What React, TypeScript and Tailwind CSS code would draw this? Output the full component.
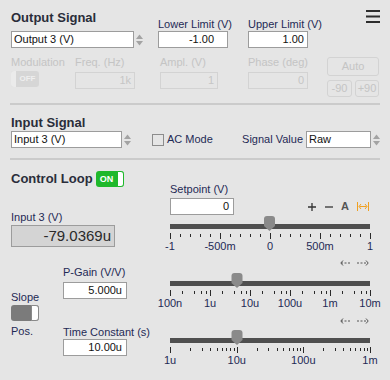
import React from "react";

type Tick = { x: number; major: boolean };
type Lbl = { x: number; t: string };

function Spinner() {
  return (
    <svg width="7" height="12" viewBox="0 0 7 12" className="shrink-0">
      <path d="M0 5 L3.5 0.5 L7 5 Z" fill="#a3a3a3" />
      <path d="M0 7 L3.5 11.5 L7 7 Z" fill="#a3a3a3" />
    </svg>
  );
}

function Hamburger() {
  return (
    <svg width="14" height="13" viewBox="0 0 14 13">
      <rect x="0" y="0" width="14" height="2" fill="#2d2d2d" />
      <rect x="0" y="5.5" width="14" height="2" fill="#2d2d2d" />
      <rect x="0" y="11" width="14" height="2" fill="#2d2d2d" />
    </svg>
  );
}

function Arrows() {
  return (
    <svg width="29" height="6" viewBox="0 0 29 6">
      <path d="M3 0.5 L0.8 3 L3 5.5" stroke="#555" fill="none" strokeWidth="1" />
      <line x1="1" y1="3" x2="11" y2="3" stroke="#555" strokeDasharray="2 1.5" />
      <line x1="17" y1="3" x2="27" y2="3" stroke="#555" strokeDasharray="2 1.5" />
      <path d="M26 0.5 L28.2 3 L26 5.5" stroke="#555" fill="none" strokeWidth="1" />
    </svg>
  );
}

function Slider({ ticks, labels, thumb }: { ticks: Tick[]; labels: Lbl[]; thumb: number }) {
  const c = thumb - 165;
  return (
    <div className="flex flex-col">
      <svg width="210" height="24" viewBox="0 0 210 24" className="-ml-[5px] overflow-visible">
        <rect x="5" y="8" width="200" height="5" fill="#4f4f4f" />
        {ticks.map((t, i) => (
          <rect
            key={i}
            x={Math.round(t.x - 165)}
            y={t.major ? 17 : 18}
            width="1"
            height={t.major ? 6 : 3}
            fill="#2a2a2a"
          />
        ))}
        <path
          d={`M${c - 5.5} 3 Q${c - 5.5} 0 ${c - 2.5} 0 L${c + 2.5} 0 Q${c + 5.5} 0 ${c + 5.5} 3 L${c + 5.5} 10 L${c} 15 L${c - 5.5} 10 Z`}
          fill="#8a8a8a"
        />
      </svg>
      <div className="relative h-[13px] w-[200px]">
        {labels.map((l, i) => (
          <span
            key={i}
            className="absolute top-0 -translate-x-1/2 whitespace-nowrap leading-[13px]"
            style={{ left: l.x - 170 }}
          >
            {l.t}
          </span>
        ))}
      </div>
    </div>
  );
}

function linearTicks(): Tick[] {
  const out: Tick[] = [];
  for (let i = 0; i <= 20; i++) out.push({ x: 170 + i * 10, major: i % 5 === 0 });
  return out;
}

function logTicks(decades: number, minors: number[]): Tick[] {
  const out: Tick[] = [];
  const w = 200 / decades;
  for (let d = 0; d <= decades; d++) {
    out.push({ x: 170 + d * w, major: true });
    if (d < decades) minors.forEach((m) => out.push({ x: 170 + d * w + Math.log10(m) * w, major: false }));
  }
  return out;
}

export default function App() {
  const inputBox = "h-[17px] border border-[#9c9c9c] bg-white text-[#111] leading-[15px]";
  const offBox = "h-[17px] border border-[#d3d3d3] text-[#c6c6c6] leading-[15px] text-right pr-[3px]";

  return (
    <div className="w-[390px] h-[380px] overflow-hidden bg-[#e5e5e5] pl-[11px] pr-[10px] font-['Liberation_Sans',Arial,sans-serif] text-[11px] leading-[13px] text-[#1f2a55]">
      {/* Output Signal */}
      <div className="flex items-end pt-[10px]">
        <div className="w-[147px] flex flex-col">
          <h2 className="text-[13px] font-bold leading-[16px] text-[#2a2d3a]">Output Signal</h2>
          <div className="mt-[5px] flex items-center gap-[2px]">
            <div className={`${inputBox} w-[123px] pl-[2px]`}>Output 3 (V)</div>
            <Spinner />
          </div>
        </div>
        <div className="w-[90px] flex flex-col">
          <span>Lower Limit (V)</span>
          <div className={`${inputBox} w-[70px] text-right pr-[13px]`}>-1.00</div>
        </div>
        <div className="w-[79px] flex flex-col">
          <span>Upper Limit (V)</span>
          <div className={`${inputBox} w-[60px] text-right pr-[3px]`}>1.00</div>
        </div>
        <div className="flex-1 self-start flex justify-end">
          <Hamburger />
        </div>
      </div>

      <div className="flex mt-[8px] text-[#c4c4c4]">
        <div className="w-[64px] flex flex-col">
          <span>Modulation</span>
          <div className="mt-[2px] w-[28px] h-[16px] rounded-[3px] bg-[#d6d6d6] flex overflow-hidden">
            <div className="w-[5px] h-full bg-[#ebebeb]" />
            <span className="flex-1 text-center text-[8px] font-bold leading-[16px] text-[#efefef]">OFF</span>
          </div>
        </div>
        <div className="w-[83px] flex flex-col">
          <span>Freq. (Hz)</span>
          <div className={`${offBox} mt-[3px] w-[60px]`}>1k</div>
        </div>
        <div className="w-[90px] pl-[2px] flex flex-col">
          <span>Ampl. (V)</span>
          <div className={`${offBox} mt-[3px] w-[58px]`}>1</div>
        </div>
        <div className="w-[79px] flex flex-col">
          <span>Phase (deg)</span>
          <div className={`${offBox} mt-[3px] w-[60px]`}>0</div>
        </div>
        <div className="flex flex-col mt-[1px]">
          <div className="w-[52px] h-[19px] rounded-[3px] border border-[#d3d3d3] text-center leading-[17px]">Auto</div>
          <div className="flex gap-[3px] mt-[4px]">
            <div className="w-[25px] h-[17px] rounded-[3px] border border-[#d3d3d3] text-center leading-[15px]">-90</div>
            <div className="w-[24px] h-[17px] rounded-[3px] border border-[#d3d3d3] text-center leading-[15px]">+90</div>
          </div>
        </div>
      </div>

      <div className="mt-[6px] -ml-[1px] w-[370px] h-[2px] bg-[#cbcbcb]" />

      {/* Input Signal */}
      <h2 className="mt-[10px] text-[13px] font-bold leading-[16px] text-[#2a2d3a]">Input Signal</h2>
      <div className="flex items-center h-[17px]">
        <div className={`${inputBox} w-[111px] pl-[2px]`}>Input 3 (V)</div>
        <div className="ml-[2px]">
          <Spinner />
        </div>
        <div className="ml-[21px] w-[12px] h-[12px] border border-[#8c8c8c]" />
        <span className="ml-[3px]">AC Mode</span>
        <div className="ml-auto flex items-center">
          <span className="mr-[3px]">Signal Value</span>
          <div className={`${inputBox} w-[65px] pl-[2px]`}>Raw</div>
          <div className="ml-[2px]">
            <Spinner />
          </div>
        </div>
      </div>

      <div className="mt-[10px] -ml-[1px] w-[370px] h-[2px] bg-[#cbcbcb]" />

      {/* Control Loop */}
      <div className="flex">
        <div className="w-[159px] flex flex-col">
          <div className="mt-[11px] flex items-center h-[16px]">
            <h2 className="w-[85px] text-[13px] font-bold leading-[16px] text-[#2a2d3a]">Control Loop</h2>
            <div className="w-[28px] h-[16px] rounded-[3px] flex overflow-hidden bg-[#1fb82b]">
              <span className="w-[21px] text-center text-[9px] font-bold leading-[16px] text-white">ON</span>
              <div className="flex-1 bg-white border border-[#1fb82b] rounded-r-[3px]" />
            </div>
          </div>
          <span className="mt-[24px]">Input 3 (V)</span>
          <div className="mt-[1px] w-[104px] h-[22px] border border-[#9c9c9c] bg-[#d4d4d4] text-right pr-[3px] text-[15px] leading-[20px] text-[#2a2a2a]">
            -79.0369u
          </div>
          <div className="flex">
            <div className="w-[52px] flex flex-col">
              <span className="mt-[44px]">Slope</span>
              <div className="mt-[1px] w-[28px] h-[16px] rounded-[3px] flex overflow-hidden bg-[#7b7b7b]">
                <div className="w-[20px]" />
                <div className="flex-1 bg-white border border-[#8a8a8a] rounded-r-[3px]" />
              </div>
              <span className="mt-[4px]">Pos.</span>
            </div>
            <div className="flex flex-col">
              <span className="mt-[19px]">P-Gain (V/V)</span>
              <div className={`${inputBox} mt-[3px] h-[16px] w-[64px] text-right pr-[4px] leading-[14px]`}>5.000u</div>
              <span className="mt-[27px]">Time Constant (s)</span>
              <div className={`${inputBox} h-[16px] w-[64px] text-right pr-[4px] leading-[14px]`}>10.00u</div>
            </div>
          </div>
        </div>

        <div className="w-[210px] flex flex-col">
          <span className="mt-[23px]">Setpoint (V)</span>
          <div className="mt-[2px] flex items-center h-[17px]">
            <div className={`${inputBox} w-[64px] text-right pr-[4px]`}>0</div>
            <svg width="8" height="8" viewBox="0 0 8 8" className="ml-[74px]">
              <path d="M0 4 H8 M4 0 V8" stroke="#333" strokeWidth="1.3" />
            </svg>
            <svg width="8" height="8" viewBox="0 0 8 8" className="ml-[9px]">
              <path d="M0 4 H8" stroke="#333" strokeWidth="1.3" />
            </svg>
            <span className="ml-[8px] w-[8px] text-[11px] font-bold text-[#555] leading-[13px]">A</span>
            <svg width="12" height="9" viewBox="0 0 12 9" className="ml-[8px]">
              <path d="M0.5 0 V9 M11.5 0 V9" stroke="#f0a020" strokeWidth="1" />
              <path d="M4 2 L2 4.5 L4 7 M8 2 L10 4.5 L8 7" stroke="#f0a020" fill="none" strokeWidth="1" />
              <path d="M2.5 4.5 H9.5" stroke="#f0a020" strokeWidth="1" />
            </svg>
          </div>
          <div className="mt-[1px]">
            <Slider
              ticks={linearTicks()}
              thumb={269.5}
              labels={[
                { x: 170, t: "-1" },
                { x: 220, t: "-500m" },
                { x: 270, t: "0" },
                { x: 320, t: "500m" },
                { x: 370, t: "1" },
              ]}
            />
          </div>
          <div className="mt-[7px] w-[199px] flex justify-end">
            <Arrows />
          </div>
          <div className="mt-[7px]">
            <Slider
              ticks={logTicks(5, [2, 4, 6, 8])}
              thumb={237}
              labels={[
                { x: 170, t: "100n" },
                { x: 210, t: "1u" },
                { x: 250, t: "10u" },
                { x: 290, t: "100u" },
                { x: 330, t: "1m" },
                { x: 370, t: "10m" },
              ]}
            />
          </div>
          <div className="mt-[8px] w-[199px] flex justify-end">
            <Arrows />
          </div>
          <div className="mt-[6px]">
            <Slider
              ticks={logTicks(3, [2, 3, 4, 5, 6, 7, 8, 9])}
              thumb={237}
              labels={[
                { x: 170, t: "1u" },
                { x: 236.7, t: "10u" },
                { x: 303.3, t: "100u" },
                { x: 370, t: "1m" },
              ]}
            />
          </div>
        </div>
      </div>
    </div>
  );
}
